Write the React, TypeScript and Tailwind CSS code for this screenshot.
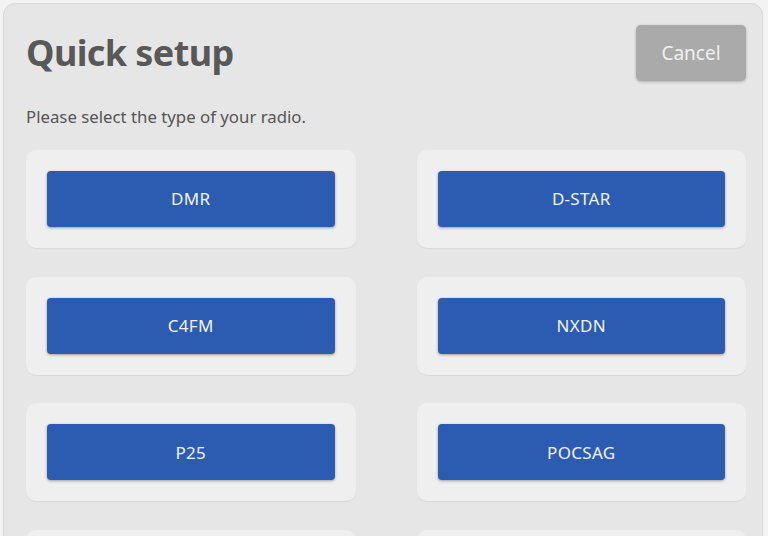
import React from "react";

const radios = ["DMR", "D-STAR", "C4FM", "NXDN", "P25", "POCSAG", "", ""];

export default function App() {
  return (
    <div className="h-[536px] overflow-hidden bg-[#f3f3f3] pl-[3px] pr-[5px] pt-[3px]" style={{ fontFamily: '"Noto Sans", "Open Sans", sans-serif' }}>
      <div className="h-[640px] rounded-[12px] border border-[#d9d9d9] bg-[#e6e6e6] pl-[22px] pr-[16px] pt-[21px]">
        <div className="flex items-center justify-between">
          <h1 className="text-[36px] font-bold leading-[56px] tracking-[-0.6px] text-[#585858]">Quick setup</h1>
          <button className="h-[56px] w-[110px] rounded-[5px] bg-[#aaaaaa] text-[19px] text-[#f0f0f0] shadow-[0_1px_3px_rgba(0,0,0,0.25)]">
            Cancel
          </button>
        </div>
        <p className="mt-[24px] text-[16.8px] leading-[24px] text-[#555555]">Please select the type of your radio.</p>
        <div className="mt-[21px] grid grid-cols-2 gap-x-[61px] gap-y-[28.67px]">
          {radios.map((r, i) => (
            <div key={i} className="rounded-[10px] bg-[#efefef] p-[21px] shadow-[0_1px_1px_rgba(0,0,0,0.06)]">
              <button className="h-[56px] w-full rounded-[4px] bg-[#2c5cb1] text-[17px] tracking-[0.3px] text-[#f2f2f2] shadow-[0_1px_3px_rgba(0,0,0,0.35)]">
                {r}
              </button>
            </div>
          ))}
        </div>
      </div>
    </div>
  );
}
